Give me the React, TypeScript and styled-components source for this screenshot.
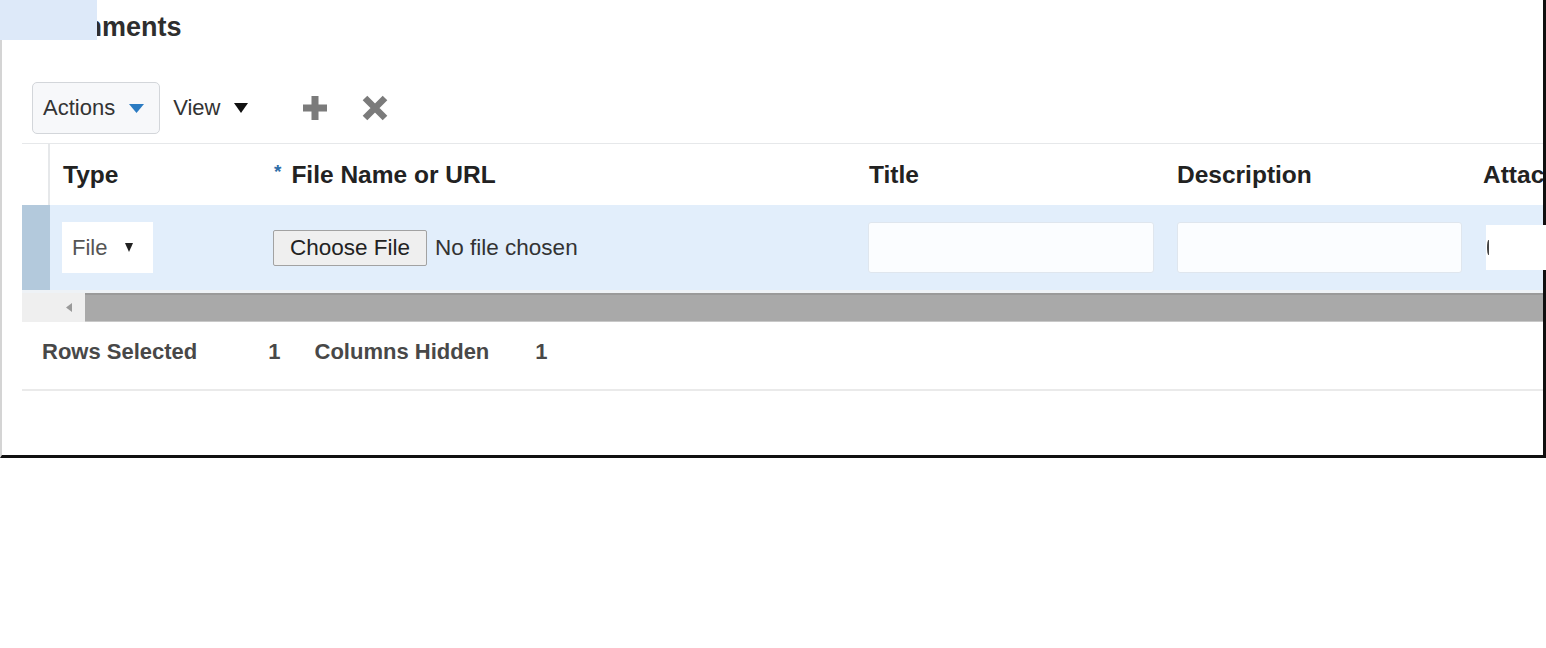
import React from "react";
import styled, { createGlobalStyle } from "styled-components";

const Global = createGlobalStyle`
  html, body { margin: 0; padding: 0; background: #ffffff; }
  body { font-family: "Liberation Sans", Arial, sans-serif; width: 1546px; height: 648px; overflow: hidden; }
  * { box-sizing: border-box; }
`;

const Frame = styled.div`
  position: relative;
  width: 1546px;
  height: 458px;
  border-left: 2px solid #d4d4d4;
  border-right: 3px solid #101010;
  border-bottom: 3px solid #101010;
  display: flex;
  flex-direction: column;
`;

const Cover = styled.div`
  position: absolute;
  left: -2px;
  top: 0;
  width: 97px;
  height: 40px;
  background: #dde9f9;
  z-index: 2;
`;

const Heading = styled.h2`
  margin: 0;
  padding: 12px 0 0 16px;
  height: 43px;
  font-size: 27px;
  line-height: 31px;
  font-weight: 700;
  color: #2e2e2e;
  white-space: nowrap;
`;

const Toolbar = styled.div`
  display: flex;
  align-items: center;
  margin: 39px 0 0 30px;
  height: 52px;
`;

const MenuButton = styled.button<{ $boxed?: boolean }>`
  display: flex;
  align-items: center;
  gap: 14px;
  height: 52px;
  padding: 0 ${(p) => (p.$boxed ? "15px" : "10px")} 0 ${(p) => (p.$boxed ? "10px" : "12px")};
  font-family: inherit;
  font-size: 22px;
  color: #333;
  background: ${(p) => (p.$boxed ? "#f7f8fa" : "transparent")};
  border: 1px solid ${(p) => (p.$boxed ? "#d3d6da" : "transparent")};
  border-radius: 5px;
`;

const IconButton = styled.span<{ $ml: number }>`
  display: flex;
  align-items: center;
  margin-left: ${(p) => p.$ml}px;
`;

const Table = styled.div`
  margin: 9px 0 0 20px;
  display: flex;
  flex-direction: column;
`;

const cols = "28px 211px 595px 308px 306px 1fr";

const HeaderRow = styled.div`
  display: grid;
  grid-template-columns: ${cols};
  height: 62px;
  border-top: 1px solid #e6e8ea;
`;

const HeaderCell = styled.div<{ $pl?: number }>`
  display: flex;
  align-items: center;
  padding-left: ${(p) => p.$pl ?? 13}px;
  font-size: 24.5px;
  font-weight: 700;
  color: #222;
  white-space: nowrap;
  overflow: hidden;
`;

const SelectorHead = styled.div`
  border-right: 2px solid #e6e8ea;
`;

const Req = styled.span`
  color: #2f6ea8;
  font-size: 19px;
  align-self: flex-start;
  margin-top: 17px;
  margin-right: 10px;
`;

const DataRow = styled.div`
  display: grid;
  grid-template-columns: ${cols};
  height: 88px;
  background: #e2eefb;
  border-bottom: 3px solid #eef2f6;
`;

const Selector = styled.div`
  background: #b3c9dc;
`;

const Cell = styled.div<{ $pl: number }>`
  display: flex;
  align-items: center;
  padding-left: ${(p) => p.$pl}px;
  white-space: nowrap;
`;

const Select = styled.div`
  display: flex;
  align-items: center;
  width: 91px;
  height: 51px;
  padding-left: 10px;
  background: #ffffff;
  font-size: 22px;
  color: #555;
  gap: 18px;
`;

const FileButton = styled.button`
  height: 36px;
  padding: 0 16px;
  font-family: inherit;
  font-size: 22.5px;
  color: #222;
  background: #efefef;
  border: 1px solid #a2a2a2;
  border-radius: 2px;
`;

const FileText = styled.span`
  margin-left: 8px;
  font-size: 22.5px;
  color: #333;
`;

const TextInput = styled.div<{ $w: number }>`
  width: ${(p) => p.$w}px;
  height: 51px;
  background: #fbfdff;
  border: 1px solid #dfe6ee;
  border-radius: 3px;
`;

const CutBox = styled.div`
  position: relative;
  z-index: 1;
  width: 60px;
  height: 45px;
  background: #ffffff;
  display: flex;
  align-items: center;
`;

const CutEdge = styled.span`
  width: 3px;
  height: 15px;
  margin-left: 1px;
  border-left: 2px solid #444;
  border-radius: 60% 0 0 60%;
`;

const Scrollbar = styled.div`
  display: flex;
  height: 29px;
`;

const ScrollArrow = styled.div`
  width: 63px;
  background: #efefef;
  display: flex;
  align-items: center;
  padding-left: 44px;
`;

const ScrollThumb = styled.div`
  flex: 1;
  background: #a9a9a9;
  border-top: 2px solid #9a9a9a;
  border-bottom: 1px solid #c8c8c8;
`;

const Footer = styled.div`
  display: flex;
  align-items: center;
  height: 69px;
  padding: 0 0 8px 20px;
  border-bottom: 2px solid #eaeaea;
  font-size: 22px;
  font-weight: 700;
  color: #484848;
  white-space: nowrap;
`;

const FooterItem = styled.span<{ $ml: number }>`
  margin-left: ${(p) => p.$ml}px;
`;

const Caret = ({ color, w = 14, h = 9 }: { color: string; w?: number; h?: number }) => (
  <svg width={w} height={h} viewBox="0 0 14 9" preserveAspectRatio="none">
    <path d="M0 0 L14 0 L7 9 Z" fill={color} />
  </svg>
);

const PlusIcon = () => (
  <svg width="28" height="28" viewBox="0 0 28 28">
    <path d="M14 2 V26 M2 14 H26" stroke="#7b7b7b" strokeWidth="7" />
  </svg>
);

const CloseIcon = () => (
  <svg width="28" height="28" viewBox="0 0 28 28">
    <path d="M4 4 L24 24 M24 4 L4 24" stroke="#7b7b7b" strokeWidth="6.5" />
  </svg>
);

export default function App() {
  return (
    <>
      <Global />
      <Frame>
        <Cover />
        <Heading>Attachments</Heading>
        <Toolbar>
          <MenuButton $boxed>
            Actions <Caret color="#2b7bc2" w={15} h={9} />
          </MenuButton>
          <MenuButton>
            View <Caret color="#111" w={14} h={10} />
          </MenuButton>
          <IconButton $ml={42}>
            <PlusIcon />
          </IconButton>
          <IconButton $ml={32}>
            <CloseIcon />
          </IconButton>
        </Toolbar>
        <Table>
          <HeaderRow>
            <SelectorHead />
            <HeaderCell>Type</HeaderCell>
            <HeaderCell $pl={13}>
              <Req>*</Req>File Name or URL
            </HeaderCell>
            <HeaderCell>Title</HeaderCell>
            <HeaderCell>Description</HeaderCell>
            <HeaderCell>Attac</HeaderCell>
          </HeaderRow>
          <DataRow>
            <Selector />
            <Cell $pl={12}>
              <Select>
                File <Caret color="#222" w={8} h={9} />
              </Select>
            </Cell>
            <Cell $pl={12}>
              <FileButton>Choose File</FileButton>
              <FileText>No file chosen</FileText>
            </Cell>
            <Cell $pl={12}>
              <TextInput $w={286} />
            </Cell>
            <Cell $pl={13}>
              <TextInput $w={285} />
            </Cell>
            <Cell $pl={16}>
              <CutBox>
                <CutEdge />
              </CutBox>
            </Cell>
          </DataRow>
          <Scrollbar>
            <ScrollArrow>
              <svg width="6" height="9" viewBox="0 0 6 9">
                <path d="M6 0 L0 4.5 L6 9 Z" fill="#9a9a9a" />
              </svg>
            </ScrollArrow>
            <ScrollThumb />
          </Scrollbar>
          <Footer>
            <FooterItem $ml={0}>Rows Selected</FooterItem>
            <FooterItem $ml={71}>1</FooterItem>
            <FooterItem $ml={34}>Columns Hidden</FooterItem>
            <FooterItem $ml={46}>1</FooterItem>
          </Footer>
        </Table>
      </Frame>
    </>
  );
}
